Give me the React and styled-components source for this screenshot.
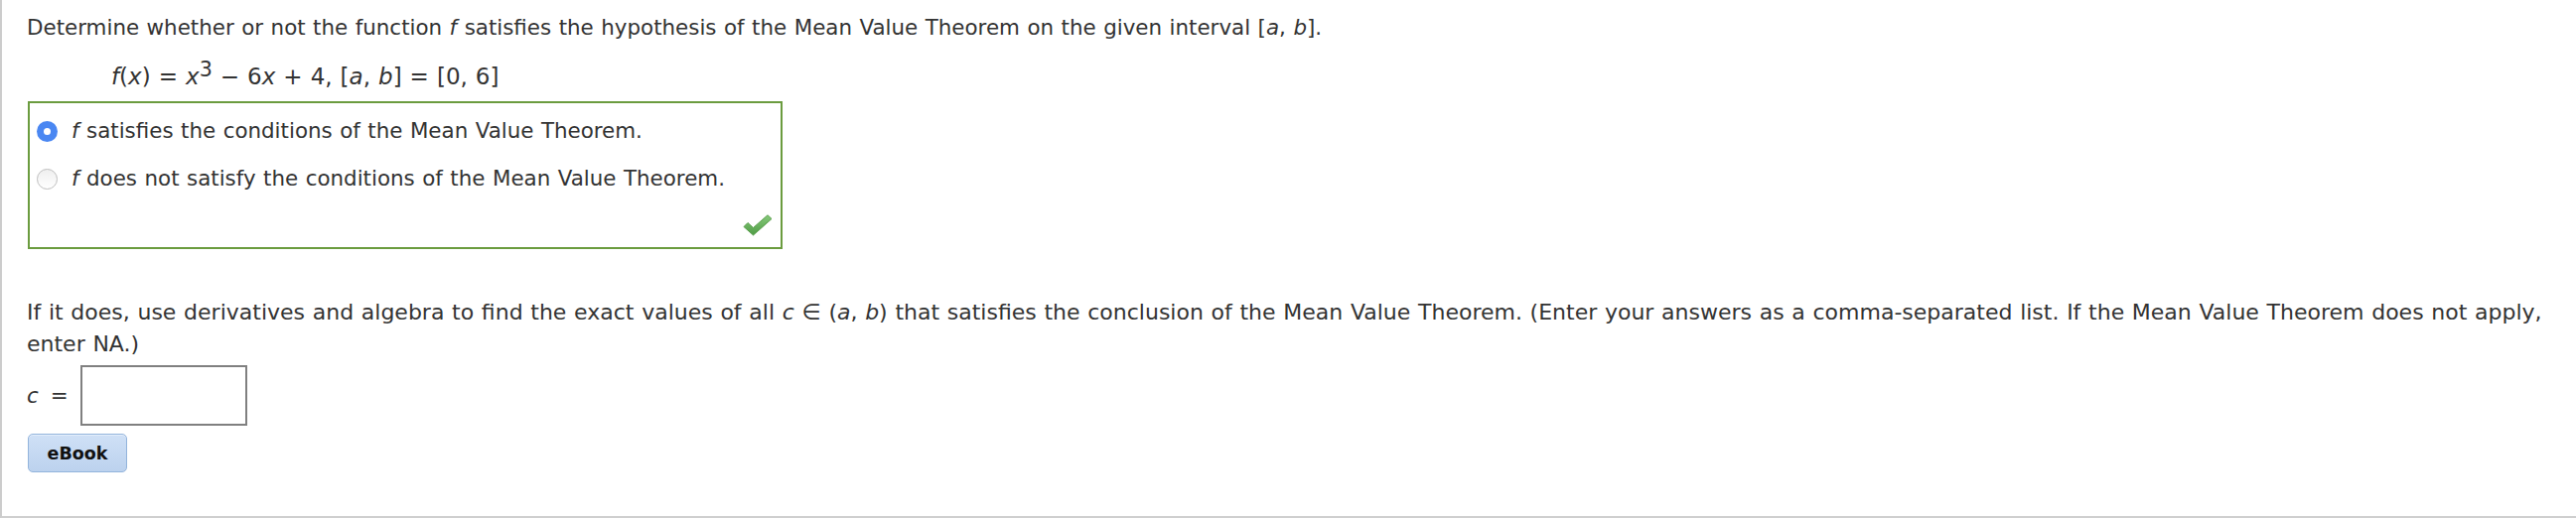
import React from 'react'
import styled, { createGlobalStyle } from 'styled-components'

const GlobalStyle = createGlobalStyle`
    html, body {
        margin: 0;
        padding: 0;
        background: #ffffff;
    }
    body {
        font-family: "DejaVu Sans", Verdana, sans-serif;
        color: #333333;
    }
`

const Page = styled.div`
    box-sizing: border-box;
    height: 522px;
    border-left: 2px solid #cccccc;
    border-bottom: 2px solid #cfcfcf;
    padding: 12px 8px 0 25px;
    font-size: 21.4px;
    line-height: 31.5px;
    word-spacing: 0.7px;
`

const Question = styled.div`
    margin: 0;
`

const Equation = styled.div`
    margin: 18px 0 0 85px;
    font-size: 23px;
`

const Sup = styled.sup`
    font-size: 0.9em;
    line-height: 0;
    vertical-align: 0.4em;
`

const V = styled.i`
    font-style: italic;
`

const ChoiceBox = styled.div`
    box-sizing: border-box;
    width: 760px;
    margin: 9px 0 0 1px;
    border: 2px solid #6b9c3f;
    padding: 4px 0 0 7px;
`

const Choice = styled.label`
    display: flex;
    align-items: center;
    gap: 14px;
    padding: 8px 0;
`

const Radio = styled.span`
    box-sizing: border-box;
    flex: none;
    width: 21px;
    height: 21px;
    border-radius: 50%;
    display: flex;
    align-items: center;
    justify-content: center;
    background: ${p => (p.checked ? '#4a87f2' : 'linear-gradient(#efefef, #ffffff)')};
    border: ${p => (p.checked ? 'none' : '1px solid #bdbdbd')};
    margin-top: 2px;

    &::after {
        content: '';
        display: ${p => (p.checked ? 'block' : 'none')};
        width: 7px;
        height: 7px;
        border-radius: 50%;
        background: #ffffff;
    }
`

const BoxFooter = styled.div`
    display: flex;
    justify-content: flex-end;
    padding: 13px 8px 11px 0;
`

const Para = styled.p`
    margin: 48px 0 0 0;
    font-size: 22px;
`

const AnswerRow = styled.div`
    display: flex;
    align-items: center;
    gap: 12px;
    margin-top: 6px;
`

const AnswerInput = styled.input`
    box-sizing: border-box;
    width: 168px;
    height: 61px;
    border: 2px solid #808080;
    margin: 0;
    padding: 0 6px;
    font: inherit;
`

const EBook = styled.button`
    display: block;
    box-sizing: border-box;
    margin: 8px 0 0 1px;
    width: 100px;
    height: 39px;
    border: 1px solid #93b4dc;
    border-radius: 5px;
    background: linear-gradient(#cfe0f6, #bcd2ee);
    box-shadow: inset 0 1px 0 #e4eefb;
    font-family: "DejaVu Sans", Verdana, sans-serif;
    font-weight: 700;
    font-size: 17.5px;
    word-spacing: 0;
    color: #111111;
    padding: 0;
`

const Check = () => (
    <svg width="30" height="22" viewBox="0 0 30 22">
        <defs>
            <linearGradient id="ck" x1="0" y1="0" x2="0" y2="1">
                <stop offset="0" stopColor="#86c97a" />
                <stop offset="1" stopColor="#4f9c45" />
            </linearGradient>
        </defs>
        <path
            d="M1 12.5 L5 8.5 L10.5 13.5 L25 0.8 L29 4.5 L10.5 21 Z"
            fill="url(#ck)"
            stroke="#5a9f4c"
            strokeWidth="1"
            strokeLinejoin="round"
        />
    </svg>
)

export default function App() {
    return (
        <Page>
            <GlobalStyle />
            <Question>
                Determine whether or not the function <V>f</V> satisfies the hypothesis of the Mean Value Theorem on the given interval [<V>a</V>, <V>b</V>].
            </Question>
            <Equation>
                <V>f</V>(<V>x</V>) = <V>x</V><Sup>3</Sup> − 6<V>x</V> + 4, [<V>a</V>, <V>b</V>] = [0, 6]
            </Equation>
            <ChoiceBox>
                <Choice>
                    <Radio checked />
                    <span><V>f</V> satisfies the conditions of the Mean Value Theorem.</span>
                </Choice>
                <Choice>
                    <Radio />
                    <span><V>f</V> does not satisfy the conditions of the Mean Value Theorem.</span>
                </Choice>
                <BoxFooter>
                    <Check />
                </BoxFooter>
            </ChoiceBox>
            <Para>
                If it does, use derivatives and algebra to find the exact values of all <V>c</V> ∈ (<V>a</V>, <V>b</V>) that satisfies the conclusion of the Mean Value Theorem. (Enter your answers as a comma-separated list. If the Mean Value Theorem does not apply,
                <br />
                enter NA.)
            </Para>
            <AnswerRow>
                <V>c</V> =
                <AnswerInput type="text" />
            </AnswerRow>
            <EBook>eBook</EBook>
        </Page>
    )
}
